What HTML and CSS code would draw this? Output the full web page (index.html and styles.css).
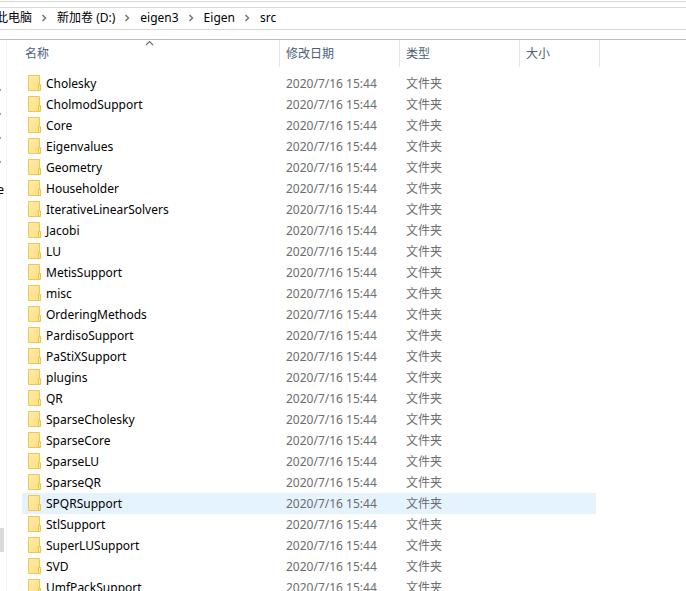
FILE: index.html
```html
<!DOCTYPE html>
<html lang="zh-CN">
<head>
<meta charset="utf-8">
<title>src</title>
<link rel="stylesheet" href="styles.css">
</head>
<body>
<div class="window">
  <header class="toolbar">
    <nav class="address">
      <a href="#">此电脑</a>
      <svg class="chevron" viewBox="0 0 25 12"><path d="M10.5 3l3 3-3 3"/></svg>
      <a href="#">新加卷 (D:)</a>
      <svg class="chevron" viewBox="0 0 25 12"><path d="M10.5 3l3 3-3 3"/></svg>
      <a href="#">eigen3</a>
      <svg class="chevron" viewBox="0 0 25 12"><path d="M10.5 3l3 3-3 3"/></svg>
      <a href="#">Eigen</a>
      <svg class="chevron" viewBox="0 0 25 12"><path d="M10.5 3l3 3-3 3"/></svg>
      <a href="#">src</a>
    </nav>
  </header>
  <div class="content">
    <aside class="tree">
      <div class="node pinned"></div>
      <div class="node pinned"></div>
      <div class="node pinned"></div>
      <div class="node pinned"></div>
      <div class="node label">e</div>
      <div class="node current"></div>
    </aside>
    <main class="files">
      <table>
        <colgroup><col class="col-name"><col class="col-date"><col class="col-type"><col class="col-size"></colgroup>
        <thead>
          <tr>
            <th class="sorted">名称<svg class="sort" viewBox="0 0 9 6"><path d="M1 5l3.5-3.5L8 5"/></svg></th>
            <th>修改日期</th><th>类型</th><th>大小</th>
          </tr>
        </thead>
        <tbody id="rows"></tbody>
      </table>
    </main>
  </div>
</div>
<script src="files.js"></script>
</body>
</html>
```
FILE: styles.css
```css
* {
  box-sizing: border-box;
}

body {
  margin: 0;
  background: #fff;
  color: #000;
  font: 12px/20px "Noto Sans", "Noto Sans CJK SC", sans-serif;
}

.window {
  display: flex;
  flex-direction: column;
  height: 100vh;
  overflow: hidden;
}

.toolbar {
  flex: none;
  margin-top: 1px;
  padding: 5px 0 9px;
  border-top: 1px solid #d9d9d9;
  border-bottom: 1px solid #b9bcbc;
}

.address {
  display: flex;
  align-items: center;
  height: 23px;
  padding-bottom: 1px;
  margin-left: -4px;
  border: solid #d9d9d9;
  border-width: 1px 0;
  white-space: nowrap;
}

.address a {
  color: #000;
  text-decoration: none;
}

.chevron {
  flex: none;
  width: 25px;
  height: 12px;
  fill: none;
  stroke: #767676;
  stroke-width: 1.5;
}

.content {
  display: flex;
  flex: 1;
  min-height: 0;
}

.tree {
  flex: none;
  width: 7px;
  padding-top: 38px;
  border-right: 1px solid #f3f3f3;
  overflow: hidden;
}

.node {
  display: flex;
  align-items: center;
  justify-content: flex-end;
  width: 4px;
  height: 24px;
}

.pinned::before {
  content: "";
  width: 1px;
  height: 2px;
  margin-right: auto;
  background: #a0a6a6;
}

.label {
  height: 28px;
  padding-top: 4px;
}

.current {
  margin-top: 326px;
  background: #d9d9d9;
}

.files {
  flex: 1;
  min-width: 0;
  padding-left: 15px;
  overflow: hidden;
}

table {
  width: 578px;
  table-layout: fixed;
  border-spacing: 0;
}

.col-name {
  width: 258px;
}

.col-date,
.col-type {
  width: 120px;
}

.col-size {
  width: 80px;
}

th {
  position: relative;
  height: 27px;
  padding: 0 0 0 6px;
  border-right: 1px solid #e5e5e5;
  color: #4c607a;
  font-weight: 400;
  text-align: left;
}

th.sorted {
  padding-left: 3px;
}

.sort {
  position: absolute;
  top: 0;
  left: 50%;
  width: 9px;
  height: 6px;
  margin-left: -6px;
  fill: none;
  stroke: #6d6d6d;
  stroke-width: 1.2;
}

tbody::before {
  content: "";
  display: table-row;
  height: 6px;
}

td {
  height: 21px;
  padding: 0 0 0 6px;
  color: #6d6d6d;
  line-height: 21px;
  white-space: nowrap;
}

td:last-child {
  border-right: 4px solid transparent;
  background-clip: padding-box;
}

.hover td {
  background-color: #e5f3ff;
}

.name {
  display: flex;
  align-items: center;
  gap: 5px;
  color: #000;
}

.folder {
  flex: none;
  width: 13px;
  height: 17px;
  padding-bottom: 1px;
}
```
FILE: files.js
```js
const folders = [
  "Cholesky", "CholmodSupport", "Core", "Eigenvalues", "Geometry", "Householder",
  "IterativeLinearSolvers", "Jacobi", "LU", "MetisSupport", "misc", "OrderingMethods",
  "PardisoSupport", "PaStiXSupport", "plugins", "QR", "SparseCholesky", "SparseCore",
  "SparseLU", "SparseQR", "SPQRSupport", "StlSupport", "SuperLUSupport", "SVD",
  "UmfPackSupport"
];
const hovered = "SPQRSupport";

const icon = `<svg class="folder" viewBox="0 0 13 16">
  <defs><linearGradient id="paper" x2="1" y2="1"><stop stop-color="#ffeaa9"/><stop offset="1" stop-color="#ffdf80"/></linearGradient></defs>
  <path d="M.5.5h11v15H.5z" fill="url(#paper)" stroke="#ecc957"/>
  <path d="M10.5 9.5h2v6h-2z" fill="#ffe694" stroke="#e9c54c"/>
</svg>`;

document.getElementById("rows").innerHTML = folders.map(name => `
  <tr${name === hovered ? ' class="hover"' : ""}>
    <td><div class="name">${icon}<span>${name}</span></div></td>
    <td>2020/7/16 15:44</td>
    <td>文件夹</td>
    <td></td>
  </tr>`).join("");
```
